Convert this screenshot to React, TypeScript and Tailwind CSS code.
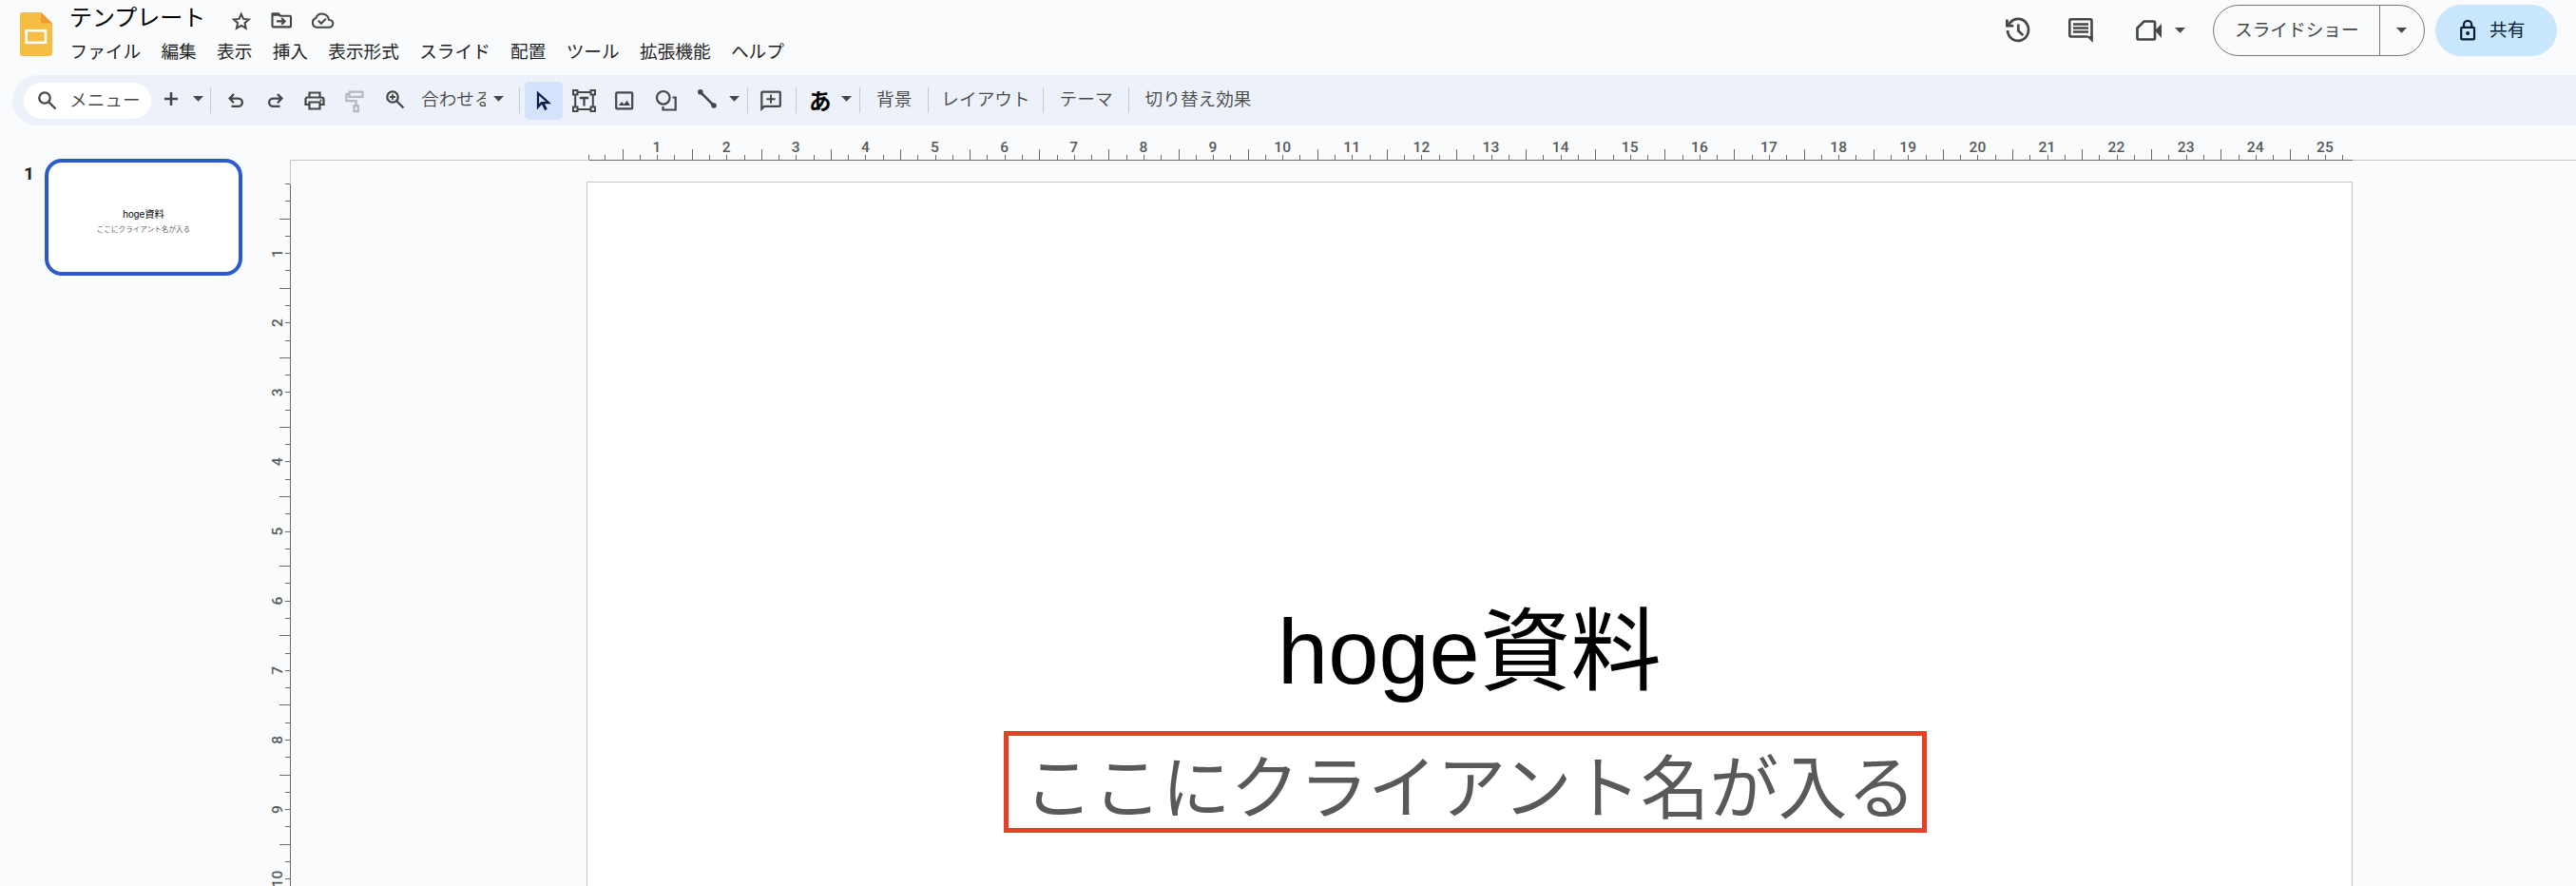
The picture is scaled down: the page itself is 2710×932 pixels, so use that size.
import type { ReactNode } from "react";

const CM = 73.12;

function Icon({ w, h, children, className = "text-[#444746]", sw = 2.3 }: { w: number; h: number; children: ReactNode; className?: string; sw?: number }) {
  return (
    <svg width={w} height={h} viewBox={`0 0 ${w} ${h}`} fill="none" stroke="currentColor" strokeWidth={sw} className={`shrink-0 ${className}`}>
      {children}
    </svg>
  );
}

function Caret({ className = "" }: { className?: string }) {
  return (
    <svg width="11" height="6" viewBox="0 0 11 6" className={`shrink-0 text-[#444746] ${className}`}>
      <path d="M0 0h11L5.500 5.700z" fill="currentColor" />
    </svg>
  );
}

function Divider({ className = "" }: { className?: string }) {
  return <div className={`h-[27px] w-px shrink-0 bg-[#c7c9cb] ${className}`} />;
}

const menus = ["ファイル", "編集", "表示", "挿入", "表示形式", "スライド", "配置", "ツール", "拡張機能", "ヘルプ"];

function Header() {
  return (
    <header className="flex h-[79px] shrink-0">
      <svg width="34" height="46" viewBox="0 0 34 46" className="mt-[13px] ml-[21px] shrink-0">
        <path d="M3 0h19.500L34 11.500V43a3 3 0 0 1-3 3H3a3 3 0 0 1-3-3V3a3 3 0 0 1 3-3z" fill="#f5bd42" />
        <path d="M22 0l12 11.500H22z" fill="#f19b37" />
        <rect x="6.700" y="19.200" width="20.300" height="12.600" fill="none" stroke="#fff" strokeWidth="2.600" />
      </svg>
      <div className="ml-[18px] flex flex-col">
        <div className="flex h-[38px] items-center">
          <h1 className="w-[170px] pb-[5px] text-[24px] leading-[32px] font-normal whitespace-nowrap text-black">テンプレート</h1>
          <Icon w={22} h={22} sw={2} className="mt-[5px] text-[#444746]">
            <path d="M10.800 3.800l2.300 5.100 5.600.6-4.200 3.700 1.200 5.500-4.900-2.900-4.900 2.900 1.200-5.500-4.200-3.700 5.600-.6z" />
          </Icon>
          <Icon w={23} h={18} sw={2.1} className="mt-[4px] ml-[20px] text-[#444746]">
            <path d="M2 2.500h6l2 2.300h10a1 1 0 0 1 1 1v9.600a1 1 0 0 1-1 1H2.500a1 1 0 0 1-1-1V2.500z" />
            <path d="M1.500 1.500h6.800l2.700 3.300H1.500z" fill="currentColor" stroke="none" />
            <path d="M6 10.400h8M11.200 7l3.400 3.400-3.400 3.400" />
          </Icon>
          <svg width="26" height="18" viewBox="0 0 26 18" fill="none" stroke="currentColor" strokeWidth="2" className="mt-[5px] ml-[18px] shrink-0 text-[#444746]">
            <path d="M6.800 15.700a5 5 0 0 1-.6-9.600 7.200 7.200 0 0 1 13.800 1.800 3.900 3.900 0 0 1 .8 7.800z" />
            <path d="M8.800 8.800l3 3 5.200-5.200" />
          </svg>
        </div>
        <nav className="flex h-[30px] items-center gap-[21.300px] pl-[0.500px] text-[18.667px] text-[#1f1f1f]">
          {menus.map((m) => (
            <span key={m} className="whitespace-nowrap">{m}</span>
          ))}
        </nav>
      </div>
      <div className="mt-[5px] mr-[20px] ml-auto flex h-[54px] items-center">
        <Icon w={28} h={28} sw={2.7}>
          <path d="M3 14a11 11.500 0 1 0 3-8.500L3.500 8.500" />
          <path d="M2.400 2.500v6.700h6.800" />
          <path d="M14.300 7.500v6.800l5 4.800" />
        </Icon>
        <Icon w={28} h={28} sw={2.600} className="ml-[38px] text-[#444746]">
          <path d="M21.500 20.500h-18a1.200 1.200 0 0 1-1.200-1.200V3.500a1.200 1.200 0 0 1 1.200-1.200h20.800a1.200 1.200 0 0 1 1.200 1.200v19" />
          <path d="M20 20h6.800v7z" fill="currentColor" stroke="none" />
          <path d="M6 7.500h16M6 11.500h16M6 15.500h16" strokeWidth="2.300" />
        </Icon>
        <Icon w={29} h={24} sw={2.700} className="ml-[43px] text-[#444746]">
          <path d="M9.500 2.500h10a1.500 1.500 0 0 1 1.500 1.500v16a1.500 1.500 0 0 1-1.500 1.500H4a1.500 1.500 0 0 1-1.500-1.500V9.500z" />
          <path d="M21 12l7-7v15z" fill="currentColor" stroke="none" />
        </Icon>
        <Caret className="ml-[13px]" />
        <div className="ml-[29px] flex h-[54px] w-[223px] items-center rounded-full border border-[#747775]">
          <span className="flex h-full w-[175px] items-center border-r border-[#747775] pb-[4px] pl-[22px] text-[18.667px] whitespace-nowrap text-[#444746]">スライドショー</span>
          <Caret className="ml-[17px]" />
        </div>
        <div className="ml-[11px] flex h-[54px] w-[128px] items-center rounded-[27px] bg-[#c8e6fc] text-[#001d35]">
          <Icon w={18} h={24} sw={2.200} className="ml-[25px] text-[#001d35]">
            <rect x="2.200" y="8.800" width="13.800" height="12.600" rx="1" />
            <path d="M5 8.500V6a4.100 4.100 0 0 1 8.200 0v2.500" />
            <circle cx="9.100" cy="15" r="2" fill="currentColor" stroke="none" />
          </Icon>
          <span className="ml-[14px] pb-[4px] text-[18.667px] whitespace-nowrap">共有</span>
        </div>
      </div>
    </header>
  );
}

function Toolbar() {
  return (
    <div className="ml-[13px] flex h-[53px] shrink-0 items-center rounded-l-full bg-[#edf2fa] pb-[3px] text-[18.667px] font-[350] text-[#444746]">
      <div className="mt-[3px] ml-[12px] flex h-[38px] w-[134px] shrink-0 items-center rounded-full bg-white">
        <Icon w={20} h={20} sw={2.300} className="ml-[15px] text-[#444746]">
          <circle cx="7" cy="7" r="5.700" />
          <path d="M11 11l7.500 7.500" />
        </Icon>
        <span className="ml-[13px] pb-[4px] whitespace-nowrap">メニュー</span>
      </div>
      <Icon w={14} h={14} sw={2.600} className="ml-[14px] text-[#444746]"><path d="M7 0v14M0 7h14" /></Icon>
      <Caret className="ml-[16px]" />
      <Divider className="mt-[3px] ml-[7px]" />
      <Icon w={17} h={16} className="mt-[4px] ml-[18px] text-[#444746]">
        <path d="M2 5.600h8.800a4.100 4.100 0 0 1 0 8.200H3.500M6 1L1.600 5.600 6 10.200" />
      </Icon>
      <Icon w={17} h={16} className="mt-[4px] ml-[24px] text-[#444746]">
        <path d="M15 5.600H6.200a4.100 4.100 0 0 0 0 8.200h7.300M11 1l4.400 4.600L11 10.200" />
      </Icon>
      <Icon w={22} h={20} sw={2.200} className="mt-[3px] ml-[22px] text-[#444746]">
        <path d="M5.500 6V1.500h11V6M5.200 14H1.500V8.500A2 2 0 0 1 3.500 6.500h15a2 2 0 0 1 2 2V14h-3.700M5.500 11.500h11v7h-11z" />
        <circle cx="17.500" cy="9.500" r="1.100" fill="currentColor" stroke="none" />
      </Icon>
      <Icon w={20} h={24} sw={2.200} className="mt-[5px] ml-[21px] text-[#b5b8bb]">
        <path d="M4.500 1.600h14v5.300h-14zM4.500 4.200H1.400v7h10.200v5M9.500 16.200h4.300v6H9.500z" />
      </Icon>
      <Icon w={20} h={20} sw={2.300} className="mt-[1px] ml-[23px] text-[#444746]">
        <circle cx="7" cy="7" r="5.700" />
        <path d="M11 11l7.500 7.500" />
        <path d="M7 4v6M4 7h6" strokeWidth="1.800" />
      </Icon>
      <span className="ml-[17px] w-[68px] shrink-0 overflow-hidden pb-[2px] whitespace-nowrap">合わせる</span>
      <Caret className="ml-[8px]" />
      <Divider className="mt-[3px] ml-[16px]" />
      <div className="mt-[4px] ml-[5px] flex h-[40px] w-[40px] shrink-0 items-center rounded-[5px] bg-[#d5e2fc]">
        <Icon w={18} h={24} sw={2.300} className="ml-[12px] text-[#0b1f4b]">
          <path d="M2 4v14.500l3.800-4.300h7.400z" />
          <path d="M6.500 13.500l4 8" strokeWidth="2.800" />
        </Icon>
      </div>
      <Icon w={26} h={26} sw={2} className="mt-[4px] ml-[10px] text-[#444746]">
        <path d="M1 2h4.500v4.500H1zM19.500 2H24v4.500h-4.500zM1 19.500h4.500V24H1zM19.500 19.500H24V24h-4.500zM5.500 4h14M5.500 22h14M3.200 6.500v13M21.800 6.500v13" />
        <path d="M7.800 10h9.400M12.500 10v8.500" strokeWidth="2.300" />
      </Icon>
      <Icon w={20} h={20} sw={2.200} className="mt-[4px] ml-[19px] text-[#444746]">
        <rect x="1.200" y="1.400" width="17" height="17" rx="1" />
        <path d="M4 15l3-4 2.500 2.800 3.200-4L16 15z" fill="currentColor" stroke="none" />
      </Icon>
      <Icon w={24} h={24} sw={2.200} className="mt-[4px] ml-[22px] text-[#444746]">
        <circle cx="8.800" cy="8.800" r="6.800" />
        <path d="M18.500 8.500h3.200v13H8.500v-3.500" />
      </Icon>
      <Icon w={20} h={20} sw={2.500} className="ml-[21px] text-[#444746]">
        <path d="M2.600 2.600l14 14" />
        <circle cx="2.800" cy="2.800" r="2.800" fill="currentColor" stroke="none" />
        <circle cx="17" cy="17" r="2.800" fill="currentColor" stroke="none" />
      </Icon>
      <Caret className="ml-[13px]" />
      <Divider className="mt-[3px] ml-[8px]" />
      <Icon w={22} h={22} sw={2.200} className="mt-[3px] ml-[13px] text-[#444746]">
        <path d="M1.300 19.500V2.600a1 1 0 0 1 1-1h17.500a1 1 0 0 1 1 1v13.300a1 1 0 0 1-1 1H4z" />
        <path d="M11 4.600v9.200M6.400 9.200h9.200" strokeWidth="1.900" />
      </Icon>
      <Divider className="mt-[3px] ml-[15px]" />
      <span className="mt-[1px] ml-[13px] w-[24px] shrink-0 text-[23.500px] leading-[30px] font-bold text-black">あ</span>
      <Caret className="ml-[10px]" />
      <Divider className="mt-[3px] ml-[8px]" />
      <span className="ml-[17px] pb-[2px] whitespace-nowrap">背景</span>
      <Divider className="mt-[3px] ml-[17px]" />
      <span className="ml-[13px] pb-[2px] whitespace-nowrap">レイアウト</span>
      <Divider className="mt-[3px] ml-[13px]" />
      <span className="ml-[17px] pb-[2px] whitespace-nowrap">テーマ</span>
      <Divider className="mt-[3px] ml-[16px]" />
      <span className="ml-[17px] pb-[2px] whitespace-nowrap">切り替え効果</span>
    </div>
  );
}

function Sidebar() {
  return (
    <aside className="flex w-[281px] shrink-0 pt-[35px] pl-[25px]">
      <span className="w-[22px] shrink-0 pt-[4px] font-['Roboto',sans-serif] text-[19px] leading-[24px] font-bold text-[#1f1f1f]">1</span>
      <div className="flex h-[123px] w-[208px] flex-col items-center rounded-[18px] border-[4px] border-[#2a5acb] bg-white">
        <span className="mt-[47px] font-['Liberation_Sans','Noto_Sans_CJK_JP',sans-serif] text-[10.300px] leading-[15px] text-black">hoge資料</span>
        <span className="mt-[1px] text-[7.600px] leading-[14px] whitespace-nowrap text-[#666]">ここにクライアント名が入る</span>
      </div>
    </aside>
  );
}

function HorizontalRuler() {
  const ticks = Array.from({ length: 102 }, (_, i) => i);
  return (
    <svg width="2405" height="37" className="shrink-0">
      <rect x="0" y="36" width="2405" height="1" fill="#c4c7c5" />
      <rect x="315" y="36" width="1855" height="1" fill="#6b6d6c" />
      {ticks.map((i) => (
        <rect key={i} x={i === 0 ? 314 : Math.round(313 + (i * CM) / 4)} y={i % 4 === 2 ? 25 : 31} width="1" height={i % 4 === 2 ? 11 : 5} fill="#6b6d6c" />
      ))}
      {Array.from({ length: 25 }, (_, i) => (
        <text key={i} x={313 + (i + 1) * CM} y="28" textAnchor="middle" className="fill-[#575959] font-['Roboto',sans-serif] text-[15.500px] font-medium tracking-[0.2px]">{i + 1}</text>
      ))}
    </svg>
  );
}

function VerticalRuler() {
  const ticks = Array.from({ length: 41 }, (_, i) => i);
  return (
    <svg width="25" height="764" className="shrink-0">
      <rect x="24" y="0" width="1" height="25" fill="#c4c7c5" />
      <rect x="24" y="25" width="1" height="739" fill="#6b6d6c" />
      {ticks.map((i) => (
        <rect key={i} x={i % 4 === 2 ? 13 : 19} y={Math.round(24 + (i * CM) / 4)} width={i % 4 === 2 ? 11 : 5} height="1" fill="#6b6d6c" />
      ))}
      {Array.from({ length: 10 }, (_, i) => {
        const y = 24.3 + (i + 1) * CM;
        return (
          <text key={i} x="16" y={y} transform={`rotate(-90 16 ${y})`} textAnchor="middle" className="fill-[#575959] font-['Roboto',sans-serif] text-[15.500px] font-medium tracking-[0.2px]">{i + 1}</text>
        );
      })}
    </svg>
  );
}

function Slide() {
  return (
    <main className="mt-[22px] ml-[311px] flex h-[760px] w-[1858px] flex-col items-center border border-b-0 border-[#c4c7c5] bg-white">
      <div className="mt-[429px] font-['Liberation_Sans','Noto_Sans_CJK_JP',sans-serif] text-[95.600px] leading-[130px] whitespace-nowrap text-black">hoge資料</div>
      <div className="mt-[18px] mr-[9px] flex h-[107px] w-[971px] items-center justify-center border-[5px] border-[#e83f28]">
        <span className="pt-[2px] pl-[10px] text-[72.400px] leading-[95px] whitespace-nowrap text-[#595959]">ここにクライアント名が入る</span>
      </div>
    </main>
  );
}

export default function App() {
  return (
    <div className="flex h-[932px] w-[2710px] flex-col overflow-hidden bg-[#f9fbfd] font-['Noto_Sans_CJK_JP',sans-serif]">
      <Header />
      <Toolbar />
      <div className="flex h-[800px]">
        <Sidebar />
        <div className="flex flex-col">
          <div className="flex h-[37px] pl-[24px]"><HorizontalRuler /></div>
          <div className="flex">
            <VerticalRuler />
            <Slide />
          </div>
        </div>
      </div>
    </div>
  );
}
